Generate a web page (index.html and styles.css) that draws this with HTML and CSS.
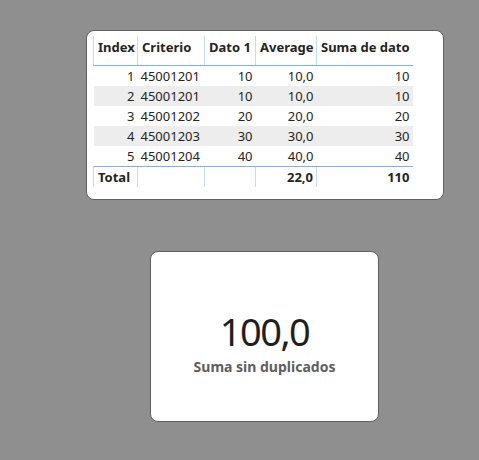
FILE: index.html
```html
<!DOCTYPE html>
<html lang="es">
<head>
    <meta charset="UTF-8">
    <meta name="viewport" content="width=device-width, initial-scale=1.0">
    <title>Informe</title>
    <link rel="stylesheet" href="styles.css">
</head>
<body>
    <div class="visual table-visual">
        <table class="matrix">
            <thead>
                <tr>
                    <th class="c-index">Index</th>
                    <th class="c-crit">Criterio</th>
                    <th class="c-dato">Dato 1</th>
                    <th class="c-avg">Average</th>
                    <th class="c-sum">Suma de dato</th>
                </tr>
            </thead>
            <tbody>
                <tr><td class="num">1</td><td>45001201</td><td class="num">10</td><td class="num">10,0</td><td class="num">10</td></tr>
                <tr class="alt"><td class="num">2</td><td>45001201</td><td class="num">10</td><td class="num">10,0</td><td class="num">10</td></tr>
                <tr><td class="num">3</td><td>45001202</td><td class="num">20</td><td class="num">20,0</td><td class="num">20</td></tr>
                <tr class="alt"><td class="num">4</td><td>45001203</td><td class="num">30</td><td class="num">30,0</td><td class="num">30</td></tr>
                <tr><td class="num">5</td><td>45001204</td><td class="num">40</td><td class="num">40,0</td><td class="num">40</td></tr>
            </tbody>
            <tfoot>
                <tr>
                    <td>Total</td>
                    <td></td>
                    <td></td>
                    <td class="num">22,0</td>
                    <td class="num">110</td>
                </tr>
            </tfoot>
        </table>
    </div>

    <div class="visual card-visual">
        <div class="card-value">100,0</div>
        <div class="card-label">Suma sin duplicados</div>
    </div>
</body>
</html>
```

FILE: styles.css
```css
body {
    font-family: "Noto Sans", "Open Sans", sans-serif;
    background-color: #8f8f8f;
    margin: 0;
    padding: 30px 0 0 0;
    display: flex;
    flex-direction: column;
    align-items: flex-start;
    color: #252423;
}
.visual {
    background: white;
    border: 1px solid #5f5f5f;
    border-radius: 8px;
    box-sizing: border-box;
}
.table-visual {
    margin-left: 86px;
    width: 358px;
    height: 170px;
    padding: 5px 0 0 6px;
}
.matrix {
    border-collapse: collapse;
    font-size: 13px;
    table-layout: fixed;
    width: 319px;
}
.c-index { width: 44px; }
.c-crit { width: 67px; }
.c-dato { width: 51px; }
.c-avg { width: 61px; }
.c-sum { width: 96px; }
.matrix th {
    text-align: left;
    font-weight: bold;
    height: 29px;
    padding: 0 2px 6px 4px;
    box-sizing: border-box;
    border-left: 1px solid #c5dbf0;
    border-bottom: 1px solid #7fb0de;
    white-space: nowrap;
    overflow: hidden;
}
.matrix td {
    height: 20px;
    padding: 0 3px 0 3px;
    white-space: nowrap;
    line-height: 20px;
}
.matrix td.num {
    text-align: right;
}
.matrix tr.alt td {
    background-color: #eeeded;
}
.matrix tfoot td {
    font-weight: bold;
    height: 20px;
    border-top: 1px solid #7fb0de;
    border-left: 1px solid #c5dbf0;
}
.matrix tfoot td:first-child {
    padding-left: 4px;
}
.card-visual {
    margin: 51px 0 0 150px;
    width: 229px;
    height: 171px;
    display: flex;
    flex-direction: column;
    align-items: center;
    justify-content: center;
    padding-top: 14px;
}
.card-value {
    font-size: 38px;
    line-height: 40px;
    color: #1f1f1f;
    letter-spacing: -1.5px;
}
.card-label {
    margin-top: 7px;
    font-size: 14px;
    font-weight: bold;
    color: #605e5c;
    line-height: 18px;
}
```
